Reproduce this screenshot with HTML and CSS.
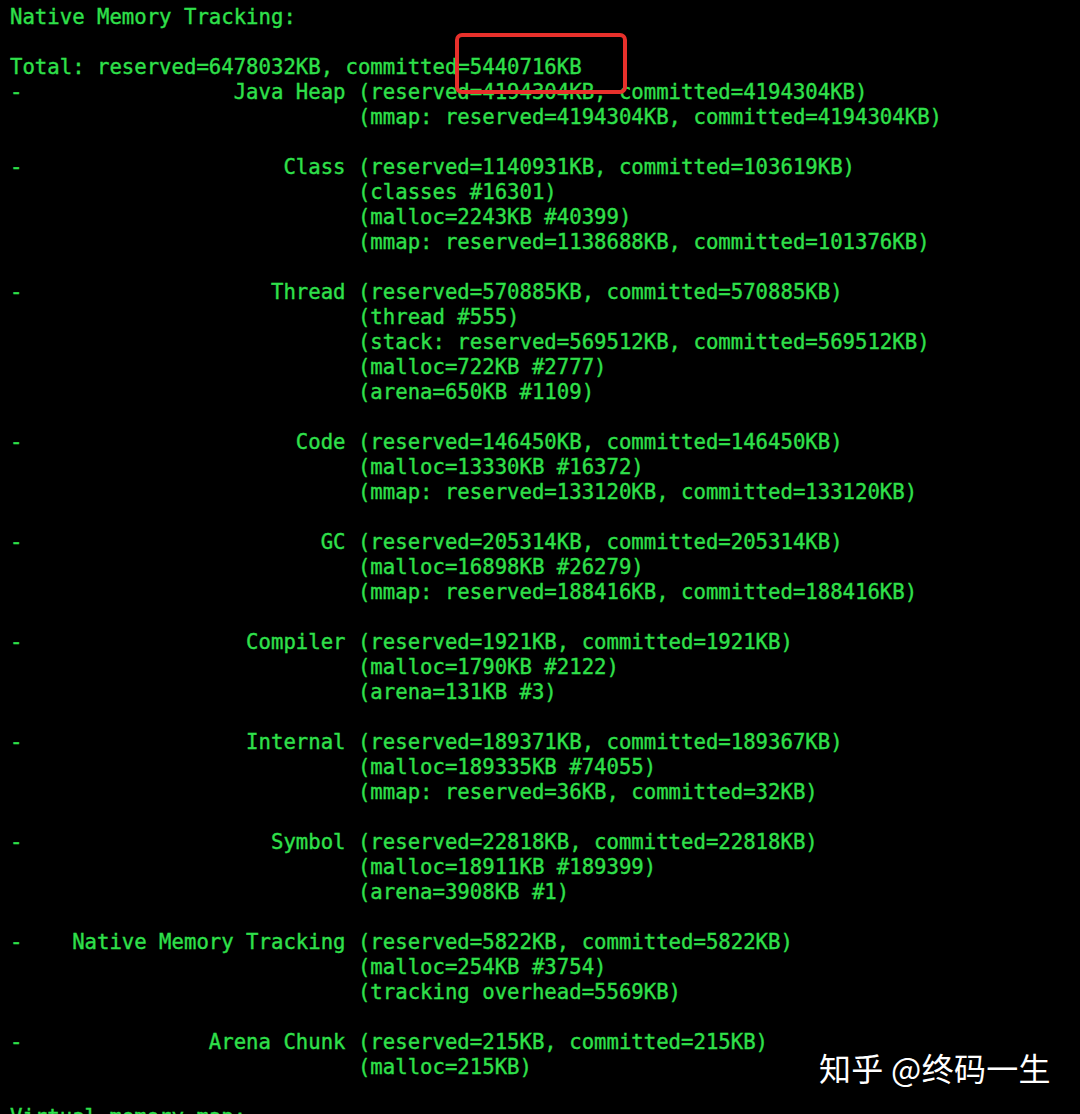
FILE: index.html
```html
<!DOCTYPE html>
<html>
<head>
<meta charset="utf-8">
<link rel="stylesheet" href="styles.css">
</head>
<body>
<div class="term">
<pre class="out">Native Memory Tracking:

Total: reserved=6478032KB, committed=5440716KB
-                 Java Heap (reserved=4194304KB, committed=4194304KB)
                            (mmap: reserved=4194304KB, committed=4194304KB)

-                     Class (reserved=1140931KB, committed=103619KB)
                            (classes #16301)
                            (malloc=2243KB #40399)
                            (mmap: reserved=1138688KB, committed=101376KB)

-                    Thread (reserved=570885KB, committed=570885KB)
                            (thread #555)
                            (stack: reserved=569512KB, committed=569512KB)
                            (malloc=722KB #2777)
                            (arena=650KB #1109)

-                      Code (reserved=146450KB, committed=146450KB)
                            (malloc=13330KB #16372)
                            (mmap: reserved=133120KB, committed=133120KB)

-                        GC (reserved=205314KB, committed=205314KB)
                            (malloc=16898KB #26279)
                            (mmap: reserved=188416KB, committed=188416KB)

-                  Compiler (reserved=1921KB, committed=1921KB)
                            (malloc=1790KB #2122)
                            (arena=131KB #3)

-                  Internal (reserved=189371KB, committed=189367KB)
                            (malloc=189335KB #74055)
                            (mmap: reserved=36KB, committed=32KB)

-                    Symbol (reserved=22818KB, committed=22818KB)
                            (malloc=18911KB #189399)
                            (arena=3908KB #1)

-    Native Memory Tracking (reserved=5822KB, committed=5822KB)
                            (malloc=254KB #3754)
                            (tracking overhead=5569KB)

-               Arena Chunk (reserved=215KB, committed=215KB)
                            (malloc=215KB)

Virtual memory map:</pre>
<div class="highlight"></div>
<div class="watermark">知乎 @终码一生</div>
</div>
</body>
</html>
```
FILE: styles.css
```css
html, body {
  margin: 0;
  padding: 0;
  background: #000;
  overflow: hidden;
}
.term {
  position: relative;
  width: 1080px;
  height: 1114px;
  background: #000;
  overflow: hidden;
}
.out {
  margin: 0;
  padding: 5px 0 0 10px;
  font-family: "DejaVu Sans Mono", "Liberation Mono", monospace;
  font-size: 20.65px;
  line-height: 25px;
  color: #2fe04b;
  -webkit-text-stroke: 0.35px #2fe04b;
  white-space: pre;
}
.highlight {
  position: absolute;
  left: 455px;
  top: 33px;
  width: 164px;
  height: 53px;
  border: 4px solid #e8302b;
  border-radius: 7px;
}
.watermark {
  position: absolute;
  left: 819px;
  top: 1045px;
  font-family: "Noto Sans CJK SC", sans-serif;
  font-size: 32px;
  line-height: 44px;
  color: #fff;
  letter-spacing: 0.3px;
}
```
